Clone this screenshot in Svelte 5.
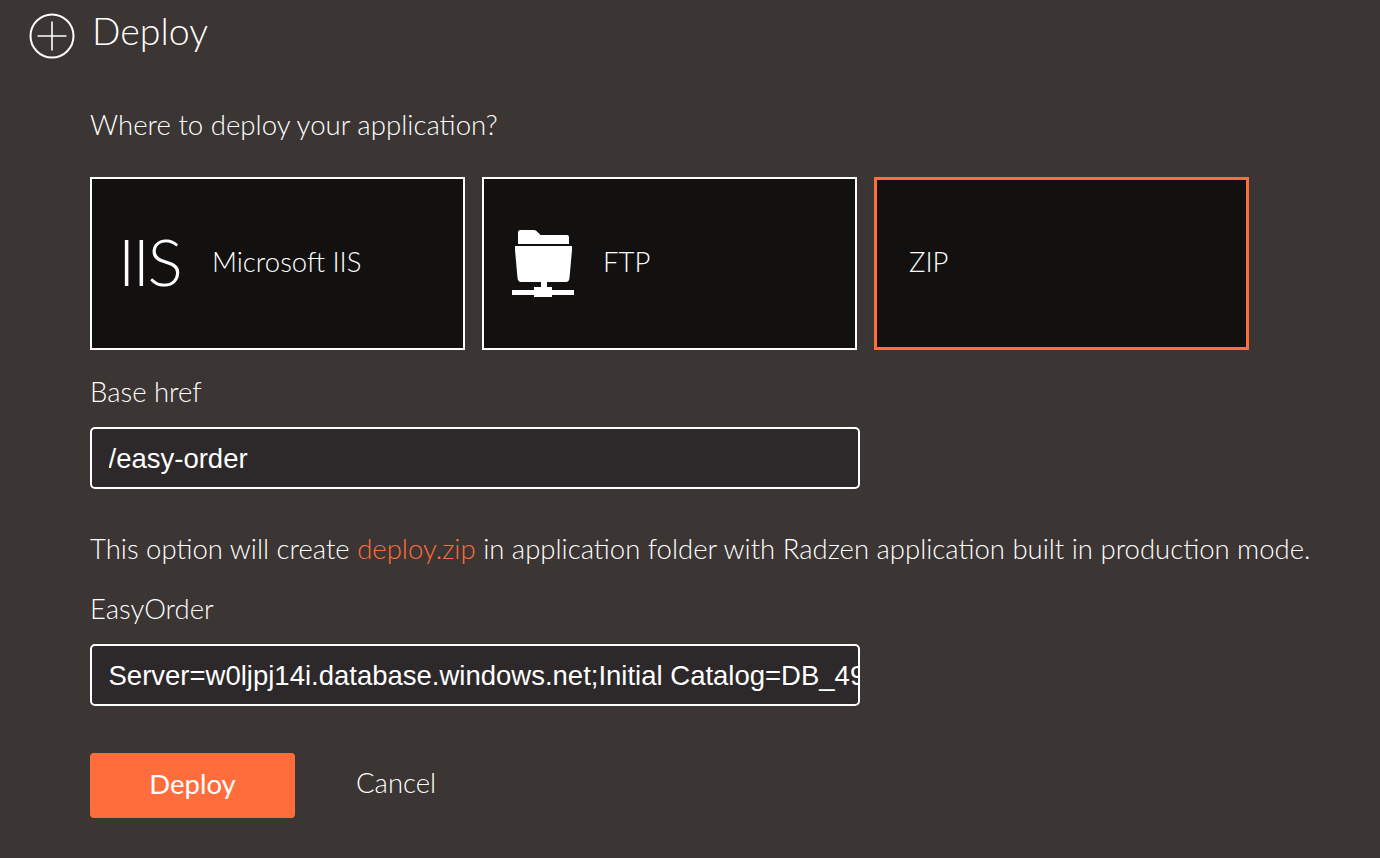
<script>
  let targets = [
    { name: 'Microsoft IIS', icon: 'iis' },
    { name: 'FTP', icon: 'ftp' },
    { name: 'ZIP', icon: null }
  ];
  let selected = 'ZIP';
  let baseHref = '/easy-order';
  let connection = 'Server=w0ljpj14i.database.windows.net;Initial Catalog=DB_49';
</script>

<div class="page">
  <header class="title">
    <svg class="add" viewBox="0 0 46 46" width="46" height="46">
      <circle cx="23" cy="23" r="21.5" fill="none" stroke="#fff" stroke-width="2" />
      <path d="M8.5 23H37.5M23 8.5V37.500" fill="none" stroke="#fff" stroke-width="1.6" />
    </svg>
    <h1>Deploy</h1>
  </header>

  <main class="content">
    <p class="question">Where to deploy your application?</p>

    <div class="targets">
      {#each targets as t}
        <button class="target" class:selected={selected === t.name} onclick={() => (selected = t.name)}>
          {#if t.icon === 'iis'}
            <span class="iis">IIS</span>
          {:else if t.icon === 'ftp'}
            <svg class="ftp" viewBox="0 0 62 67" width="62" height="67">
              <path d="M6 14V2.500Q6 0 8.500 0H22Q24 0 25.500 2L28.500 5H55Q57 5 57 7V14Z" fill="#fff" />
              <path d="M3 16H60V20L57.500 48Q57 52 54 52H9Q6 52 5.500 48L3 20Z" fill="#fff" />
              <path d="M29 52H35V57H40V60H62V65H40V67H22V65H0V60H22V57H29Z" fill="#fff" />
            </svg>
          {/if}
          <span>{t.name}</span>
        </button>
      {/each}
    </div>

    <label class="field">
      <span>Base href</span>
      <input bind:value={baseHref} />
    </label>

    <p class="info">This option will create <span class="accent">deploy.zip</span> in application folder with Radzen application built in production mode.</p>

    <label class="field">
      <span>EasyOrder</span>
      <input bind:value={connection} />
    </label>

    <div class="actions">
      <button class="primary">Deploy</button>
      <button class="cancel">Cancel</button>
    </div>
  </main>
</div>

<style>
  :global(body) {
    background: #3b3533;
    overflow: hidden;
  }

  .page {
    height: 858px;
    box-sizing: border-box;
    padding: 13px 0 0 29px;
    font-family: Lato, sans-serif;
    font-weight: 300;
    color: #fff;
    background: #3b3533;
  }

  .title {
    display: flex;
    align-items: flex-start;
    gap: 17px;
  }

  .add {
    display: block;
  }

  h1 {
    margin: 0;
    font-size: 37.5px;
    font-weight: 300;
    line-height: 36px;
  }

  .content {
    padding-left: 61px;
  }

  .question {
    margin: 49px 0 0;
    font-size: 27.6px;
    line-height: 34px;
  }

  .targets {
    display: flex;
    gap: 17px;
    margin-top: 35px;
  }

  .target {
    display: flex;
    align-items: center;
    width: 375px;
    height: 173px;
    box-sizing: border-box;
    padding: 0 0 5px 31px;
    background: #121110;
    border: 2px solid #fff;
    color: #fff;
    font: inherit;
    font-size: 27.5px;
    cursor: pointer;
  }

  .target.selected {
    padding-left: 32px;
    border: 3px solid #ff6d3d;
  }

  .iis {
    width: 94px;
    margin-left: -5px;
    font-size: 66px;
    font-weight: 300;
    letter-spacing: -2.5px;
    line-height: 1;
    text-align: left;
  }

  .ftp {
    margin-left: -3px;
    margin-right: 29px;
    margin-top: 5px;
  }

  .field {
    display: block;
  }

  .field span {
    display: block;
    font-size: 27.5px;
    line-height: 34px;
  }

  .targets + .field {
    margin-top: 25px;
  }

  .field input {
    display: block;
    width: 770px;
    height: 62px;
    box-sizing: border-box;
    margin-top: 18px;
    padding: 2px 0 0 16.5px;
    background: #2d2829;
    border: 2px solid #fff;
    border-radius: 5px;
    color: #fff;
    font-family: "Liberation Sans", Arial, sans-serif;
    font-size: 27.5px;
    outline: none;
  }

  .info {
    margin: 43px 0 26px;
    font-size: 27.5px;
    line-height: 34px;
    white-space: nowrap;
  }

  .accent {
    color: #ff6d3d;
  }

  .actions {
    display: flex;
    align-items: center;
    margin-top: 47px;
  }

  .primary {
    width: 205px;
    height: 65px;
    padding: 0 0 4px;
    background: #ff6d3d;
    border: none;
    border-radius: 4px;
    color: #fff;
    font-family: Lato, sans-serif;
    font-size: 27.5px;
    font-weight: 400;
    cursor: pointer;
  }

  .cancel {
    margin-left: 61px;
    margin-bottom: 6px;
    padding: 0;
    background: none;
    border: none;
    color: #fff;
    font: inherit;
    font-size: 27.5px;
    cursor: pointer;
  }
</style>
